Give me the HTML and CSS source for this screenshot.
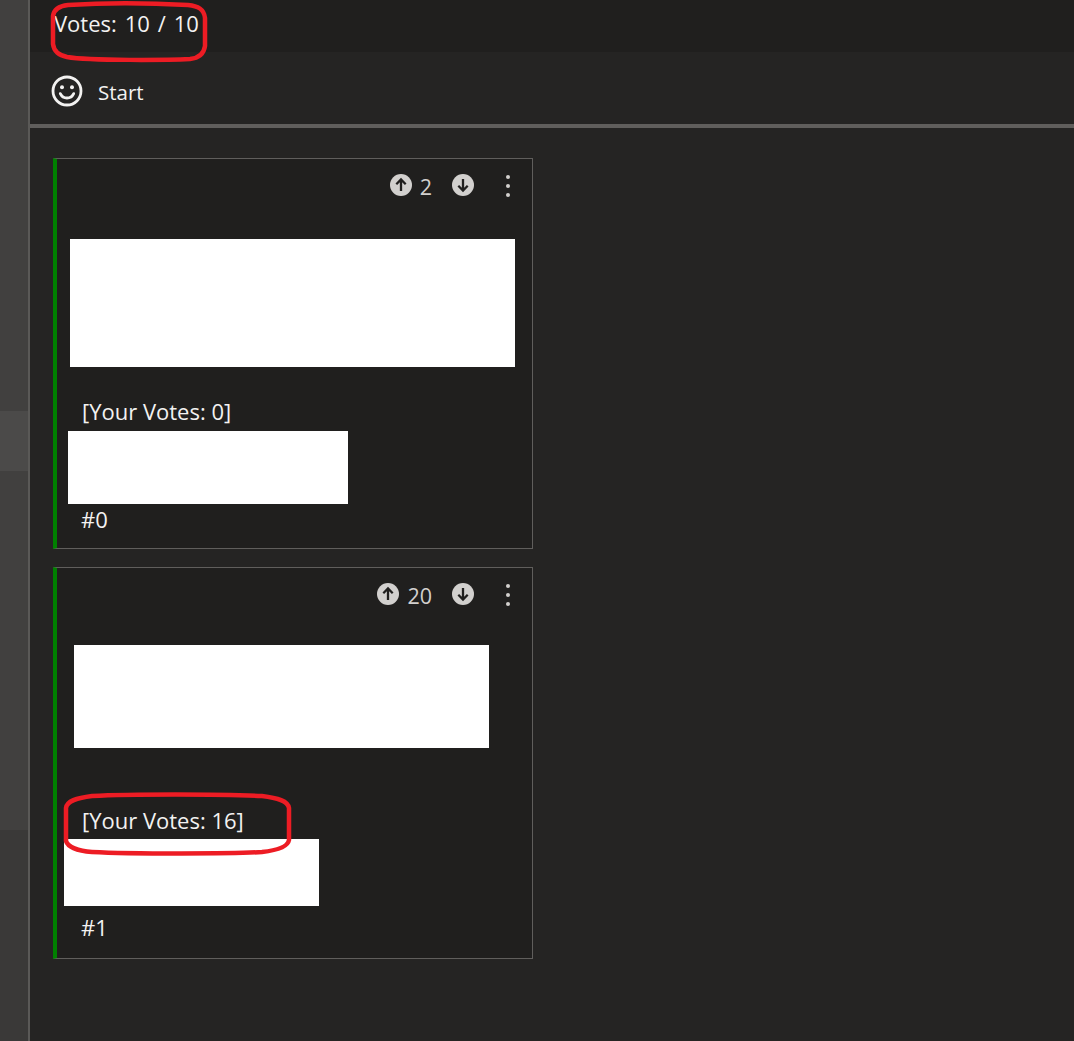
FILE: index.html
```html
<!DOCTYPE html>
<html lang="en">
<head>
<meta charset="utf-8">
<title>Votes</title>
<link rel="stylesheet" href="styles.css">
</head>
<body>
<div class="app">
  <aside class="rail">
    <div class="rail-top"></div>
    <div class="rail-active"></div>
    <div class="rail-mid"></div>
    <div class="rail-bottom"></div>
  </aside>
  <main class="main">
    <div class="votes-bar">Votes: 10 / 10</div>
    <div class="start-row">
      <svg class="smile" viewBox="0 0 32 32" aria-hidden="true">
        <circle cx="16" cy="16" r="14" />
        <path d="M9.3 18.6c1.4 2.9 3.8 4.4 6.7 4.4s5.300-1.500 6.700-4.400" />
        <circle class="eye" cx="11" cy="12.300" r="2" />
        <circle class="eye" cx="21" cy="12.300" r="2" />
      </svg>
      <span class="start-label">Start</span>
    </div>
    <section class="cards">
      <article class="card card-first">
        <header class="card-head">
          <svg class="vote-icon" viewBox="0 0 22 22" aria-hidden="true"><circle class="disc" cx="11" cy="11" r="11"/><path class="arrow" d="M11 17V5.800M6.300 10.200 11 5.500l4.700 4.700"/></svg>
          <span class="count">2</span>
          <svg class="vote-icon down" viewBox="0 0 22 22" aria-hidden="true"><circle class="disc" cx="11" cy="11" r="11"/><path class="arrow" d="M11 5v11.200M6.300 11.800 11 16.500l4.700-4.700"/></svg>
          <svg class="more" viewBox="0 0 6 24" aria-hidden="true"><circle cx="3" cy="3" r="2"/><circle cx="3" cy="12" r="2"/><circle cx="3" cy="21" r="2"/></svg>
        </header>
        <div class="redact sample"></div>
        <p class="votes-line">[Your Votes: 0]</p>
        <div class="redact author"></div>
        <p class="id-line">#0</p>
      </article>
      <article class="card card-second">
        <header class="card-head">
          <svg class="vote-icon" viewBox="0 0 22 22" aria-hidden="true"><circle class="disc" cx="11" cy="11" r="11"/><path class="arrow" d="M11 17V5.800M6.300 10.200 11 5.500l4.700 4.700"/></svg>
          <span class="count">20</span>
          <svg class="vote-icon down" viewBox="0 0 22 22" aria-hidden="true"><circle class="disc" cx="11" cy="11" r="11"/><path class="arrow" d="M11 5v11.200M6.300 11.800 11 16.500l4.700-4.700"/></svg>
          <svg class="more" viewBox="0 0 6 24" aria-hidden="true"><circle cx="3" cy="3" r="2"/><circle cx="3" cy="12" r="2"/><circle cx="3" cy="21" r="2"/></svg>
        </header>
        <div class="redact sample"></div>
        <p class="votes-line">[Your Votes: 16]</p>
        <div class="redact author"></div>
        <p class="id-line">#1</p>
      </article>
    </section>
  </main>
  <svg class="annotations" viewBox="0 0 1074 1041" aria-hidden="true">
    <path d="M68 5C59 6 54 9 53 16V44C54 52 59 55 67 57C90 61 170 60 190 59C200 58 204 53 205 46V18C204 9 198 6 188 5C150 3 100 3 68 5Z"/>
    <path d="M92 796C76 798 67 801 66 808V841C68 847 78 851 92 852C130 854 235 854 262 852C280 850 288 846 289 840V808C288 801 278 798 262 796C220 794 130 794 92 796Z"/>
  </svg>
</div>
</body>
</html>
```
FILE: styles.css
```css
html, body {
  margin: 0;
  padding: 0;
  background: #252423;
}
body {
  font-family: "Open Sans", "Liberation Sans", sans-serif;
  color: #f3f2f1;
  overflow: hidden;
}
.app {
  position: relative;
  display: flex;
  width: 1074px;
  height: 1041px;
  overflow: hidden;
}
.rail {
  display: flex;
  flex-direction: column;
  width: 28px;
  border-right: 2px solid #5a5957;
  background: #3f3e3d;
}
.rail-top { height: 411px; background: #41403f; }
.rail-active { height: 60px; background: #4b4a49; }
.rail-mid { height: 359px; background: #41403f; }
.rail-bottom { flex: 1; background: #3a3938; }
.main {
  flex: 1;
  display: flex;
  flex-direction: column;
  min-width: 0;
}
.votes-bar {
  height: 52px;
  padding-left: 24px;
  box-sizing: border-box;
  background: #201f1e;
  font-size: 22px;
  word-spacing: 2.200px;
  line-height: 47px;
}
.start-row {
  display: flex;
  align-items: center;
  box-sizing: border-box;
  height: 76px;
  padding: 6px 0 0 21px;
  border-bottom: 4px solid #605e5c;
}
.smile {
  width: 32px;
  height: 32px;
  fill: none;
  stroke: #f3f2f1;
  stroke-width: 2.800;
  stroke-linecap: round;
}
.smile .eye {
  fill: #f3f2f1;
  stroke: none;
}
.start-label {
  margin-left: 15px;
  font-size: 20.500px;
  line-height: 28px;
  padding-top: 1px;
}
.cards {
  display: flex;
  flex-direction: column;
  gap: 18px;
  padding: 30px 0 0 23px;
}
.card {
  box-sizing: border-box;
  width: 480px;
  background: #201f1e;
  border: 1px solid #605e5c;
  border-left: 4px solid #008000;
}
.card-first { padding-bottom: 15px; }
.card-second { padding-bottom: 17px; }
.card-head {
  display: flex;
  align-items: center;
  justify-content: flex-end;
  height: 22px;
  padding: 15px 21px 0 0;
}
.vote-icon {
  width: 22px;
  height: 22px;
  flex: none;
}
.disc { fill: #d2d0ce; }
.arrow {
  fill: none;
  stroke: #201f1e;
  stroke-width: 2.300;
}
.count {
  margin-left: 8px;
  font-size: 21.500px;
  line-height: 22px;
  color: #d2d0ce;
  position: relative;
  top: 2px;
}
.down { margin-left: 20px; }
.more {
  width: 6px;
  height: 24px;
  margin-left: 31px;
  fill: #d2d0ce;
  position: relative;
  top: 1px;
}
.redact { background: #fff; }
.votes-line, .id-line {
  margin: 0;
  font-size: 22px;
  line-height: 28px;
  padding-left: 25px;
}
.id-line { padding-left: 24px; }
.card-first .sample { margin: 43px 0 0 13px; width: 445px; height: 128px; }
.card-first .votes-line { margin-top: 30px; }
.card-first .author { margin: 6px 0 0 11px; width: 280px; height: 73px; }
.card-first .id-line { margin-top: 1px; }
.card-second .sample { margin: 40px 0 0 17px; width: 415px; height: 103px; }
.card-second .votes-line { margin-top: 58px; }
.card-second .author { margin: 5px 0 0 7px; width: 255px; height: 67px; }
.card-second .id-line { margin-top: 7px; }
.annotations {
  position: absolute;
  inset: 0;
  width: 1074px;
  height: 1041px;
  pointer-events: none;
  fill: none;
  stroke: #ed1c24;
  stroke-width: 4.500;
}
```
